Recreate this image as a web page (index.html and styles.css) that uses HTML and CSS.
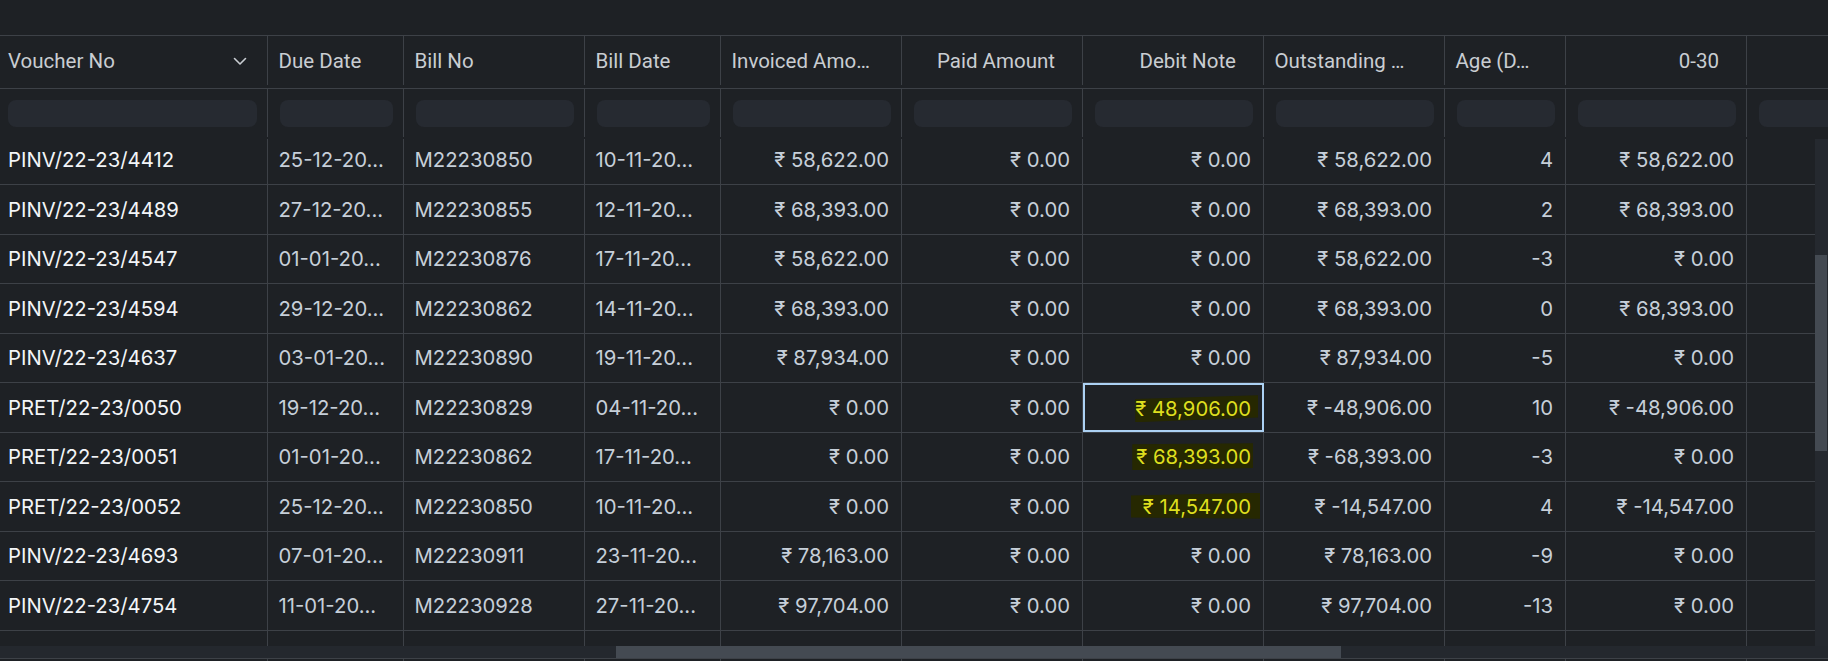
FILE: index.html
```html
<!DOCTYPE html>
<html lang="en">
<head>
<meta charset="utf-8">
<title>Bills grid</title>
<link rel="stylesheet" href="styles.css">
</head>
<body>
<div class="app">
  <div class="topbar"></div>
  <div class="grid">
    <div class="hrow">
      <div class="hcell first"><span class="htext">Voucher No</span><svg class="chev" width="14" height="9" viewBox="0 0 14 9"><polyline points="1.5,1.5 7,7 12.5,1.5" fill="none" stroke="#c9cdd2" stroke-width="1.6" stroke-linecap="round" stroke-linejoin="round"/></svg></div>
      <div class="hcell"><span class="htext">Due Date</span></div>
      <div class="hcell"><span class="htext">Bill No</span></div>
      <div class="hcell"><span class="htext">Bill Date</span></div>
      <div class="hcell"><span class="htext">Invoiced Amo…</span></div>
      <div class="hcell right"><span class="htext">Paid Amount</span></div>
      <div class="hcell right"><span class="htext">Debit Note</span></div>
      <div class="hcell"><span class="htext">Outstanding …</span></div>
      <div class="hcell"><span class="htext">Age (D…</span></div>
      <div class="hcell right"><span class="htext">0-30</span></div>
      <div class="hcell"></div>
    </div>
    <div class="frow">
      <div class="fcell first"><div class="finput"></div></div>
      <div class="fcell"><div class="finput"></div></div>
      <div class="fcell"><div class="finput"></div></div>
      <div class="fcell"><div class="finput"></div></div>
      <div class="fcell"><div class="finput"></div></div>
      <div class="fcell"><div class="finput"></div></div>
      <div class="fcell"><div class="finput"></div></div>
      <div class="fcell"><div class="finput"></div></div>
      <div class="fcell"><div class="finput"></div></div>
      <div class="fcell"><div class="finput"></div></div>
      <div class="fcell"><div class="finput"></div></div>
    </div>
    <div class="body">
      <div class="viewport">
        <div class="rows">
          <div class="row">
            <div class="cell first">PINV/22-23/4412</div><div class="cell">25-12-20...</div><div class="cell">M22230850</div><div class="cell">10-11-20...</div>
            <div class="cell num">₹ 58,622.00</div><div class="cell num">₹ 0.00</div><div class="cell num">₹ 0.00</div><div class="cell num">₹ 58,622.00</div><div class="cell num">4</div><div class="cell num">₹ 58,622.00</div><div class="cell"></div>
          </div>
          <div class="row">
            <div class="cell first">PINV/22-23/4489</div><div class="cell">27-12-20...</div><div class="cell">M22230855</div><div class="cell">12-11-20...</div>
            <div class="cell num">₹ 68,393.00</div><div class="cell num">₹ 0.00</div><div class="cell num">₹ 0.00</div><div class="cell num">₹ 68,393.00</div><div class="cell num">2</div><div class="cell num">₹ 68,393.00</div><div class="cell"></div>
          </div>
          <div class="row">
            <div class="cell first">PINV/22-23/4547</div><div class="cell">01-01-20...</div><div class="cell">M22230876</div><div class="cell">17-11-20...</div>
            <div class="cell num">₹ 58,622.00</div><div class="cell num">₹ 0.00</div><div class="cell num">₹ 0.00</div><div class="cell num">₹ 58,622.00</div><div class="cell num">-3</div><div class="cell num">₹ 0.00</div><div class="cell"></div>
          </div>
          <div class="row">
            <div class="cell first">PINV/22-23/4594</div><div class="cell">29-12-20...</div><div class="cell">M22230862</div><div class="cell">14-11-20...</div>
            <div class="cell num">₹ 68,393.00</div><div class="cell num">₹ 0.00</div><div class="cell num">₹ 0.00</div><div class="cell num">₹ 68,393.00</div><div class="cell num">0</div><div class="cell num">₹ 68,393.00</div><div class="cell"></div>
          </div>
          <div class="row">
            <div class="cell first">PINV/22-23/4637</div><div class="cell">03-01-20...</div><div class="cell">M22230890</div><div class="cell">19-11-20...</div>
            <div class="cell num">₹ 87,934.00</div><div class="cell num">₹ 0.00</div><div class="cell num">₹ 0.00</div><div class="cell num">₹ 87,934.00</div><div class="cell num">-5</div><div class="cell num">₹ 0.00</div><div class="cell"></div>
          </div>
          <div class="row">
            <div class="cell first">PRET/22-23/0050</div><div class="cell">19-12-20...</div><div class="cell">M22230829</div><div class="cell">04-11-20...</div>
            <div class="cell num">₹ 0.00</div><div class="cell num">₹ 0.00</div><div class="cell num focus"><span class="hl hl-a">₹ 48,906.00</span></div><div class="cell num">₹ -48,906.00</div><div class="cell num">10</div><div class="cell num">₹ -48,906.00</div><div class="cell"></div>
          </div>
          <div class="row">
            <div class="cell first">PRET/22-23/0051</div><div class="cell">01-01-20...</div><div class="cell">M22230862</div><div class="cell">17-11-20...</div>
            <div class="cell num">₹ 0.00</div><div class="cell num">₹ 0.00</div><div class="cell num"><span class="hl hl-b">₹ 68,393.00</span></div><div class="cell num">₹ -68,393.00</div><div class="cell num">-3</div><div class="cell num">₹ 0.00</div><div class="cell"></div>
          </div>
          <div class="row">
            <div class="cell first">PRET/22-23/0052</div><div class="cell">25-12-20...</div><div class="cell">M22230850</div><div class="cell">10-11-20...</div>
            <div class="cell num">₹ 0.00</div><div class="cell num">₹ 0.00</div><div class="cell num"><span class="hl hl-c">₹ 14,547.00</span></div><div class="cell num">₹ -14,547.00</div><div class="cell num">4</div><div class="cell num">₹ -14,547.00</div><div class="cell"></div>
          </div>
          <div class="row">
            <div class="cell first">PINV/22-23/4693</div><div class="cell">07-01-20...</div><div class="cell">M22230911</div><div class="cell">23-11-20...</div>
            <div class="cell num">₹ 78,163.00</div><div class="cell num">₹ 0.00</div><div class="cell num">₹ 0.00</div><div class="cell num">₹ 78,163.00</div><div class="cell num">-9</div><div class="cell num">₹ 0.00</div><div class="cell"></div>
          </div>
          <div class="row">
            <div class="cell first">PINV/22-23/4754</div><div class="cell">11-01-20...</div><div class="cell">M22230928</div><div class="cell">27-11-20...</div>
            <div class="cell num">₹ 97,704.00</div><div class="cell num">₹ 0.00</div><div class="cell num">₹ 0.00</div><div class="cell num">₹ 97,704.00</div><div class="cell num">-13</div><div class="cell num">₹ 0.00</div><div class="cell"></div>
          </div>
          <div class="row">
            <div class="cell first"></div><div class="cell"></div><div class="cell"></div><div class="cell"></div>
            <div class="cell"></div><div class="cell"></div><div class="cell"></div><div class="cell"></div><div class="cell"></div><div class="cell"></div><div class="cell"></div>
          </div>
        </div>
      </div>
      <div class="vscroll"><div class="vthumb"></div></div>
    </div>
    <div class="hscroll"><div class="hthumb"></div></div>
    <div class="footrow">
      <div class="cell first"></div><div class="cell"></div><div class="cell"></div><div class="cell"></div>
      <div class="cell"></div><div class="cell"></div><div class="cell"></div><div class="cell"></div><div class="cell"></div><div class="cell"></div><div class="cell"></div>
    </div>
  </div>
</div>
</body>
</html>
```

FILE: styles.css
```css
:root {
  --bg: #1e2125;
  --line: #3d4147;
  --cols: 268px 136px 181px 136px 181px 181px 181px 181px 121px 181px 220px;
}

* { box-sizing: border-box; }

html, body {
  margin: 0;
  padding: 0;
  background: var(--bg);
}

.app {
  width: 1828px;
  height: 661px;
  overflow: hidden;
  background: var(--bg);
  font-family: Roboto, "Liberation Sans", Arial, sans-serif;
}

.topbar {
  height: 35px;
}

.grid {
  border-top: 1px solid var(--line);
  display: flex;
  flex-direction: column;
}

/* header */
.hrow {
  display: grid;
  grid-template-columns: var(--cols);
  height: 53px;
  padding-bottom: 3px;
  border-bottom: 1px solid var(--line);
  overflow: hidden;
}

.hcell {
  display: flex;
  align-items: center;
  padding: 0 27px 0 10.5px;
  border-right: 1px solid var(--line);
  color: #c9cdd2;
  font-size: 20.5px;
  white-space: nowrap;
  overflow: hidden;
}

.hcell.first {
  padding: 0 20px 0 8px;
  justify-content: space-between;
}

.hcell.right {
  justify-content: flex-end;
}

.chev {
  display: block;
  margin-top: 2px;
}

/* filter row */
.frow {
  display: grid;
  grid-template-columns: var(--cols);
  height: 50px;
  padding-bottom: 2px;
  overflow: hidden;
}

.fcell {
  display: flex;
  align-items: center;
  padding: 0 10px 0 12px;
  border-right: 1px solid var(--line);
}

.fcell.first {
  padding-left: 8px;
}

.finput {
  width: 100%;
  height: 27px;
  border-radius: 8px;
  background: #262a31;
}

/* body */
.body {
  display: flex;
  height: 507px;
}

.viewport {
  flex: 1;
  overflow: hidden;
}

.rows {
  margin-top: -3.5px;
}

.row {
  display: grid;
  grid-template-columns: var(--cols);
  height: 49.5px;
  border-bottom: 1px solid var(--line);
}

.cell {
  display: flex;
  align-items: center;
  padding: 0 12px 0 10.5px;
  border-right: 1px solid var(--line);
  color: #c6cfd9;
  font-family: Inter, Roboto, "Liberation Sans", Arial, sans-serif;
  font-size: 20.3px;
  white-space: nowrap;
  overflow: hidden;
}

.cell.first {
  padding-left: 8px;
  color: #f3f5f8;
}

.cell.num {
  justify-content: flex-end;
}

.cell.focus {
  outline: 2px solid #acd1f3;
  outline-offset: -2px;
  overflow: visible;
}

.hl {
  display: inline-block;
  line-height: 25px;
  color: #dedf1f;
  background: #262801;
}

.hl-a {
  padding: 1px 7px 1px 0;
  margin-right: -7px;
  margin-top: 3px;
  clip-path: polygon(0 14%, 100% 0, 100% 82%, 0 100%);
}

.hl-b {
  padding: 1px 2px 1px 4px;
  margin-right: -2px;
  clip-path: polygon(0 4%, 100% 0, 100% 92%, 0 100%);
}

.hl-c {
  padding: 1px 9px 1px 12px;
  margin-right: -9px;
  clip-path: polygon(0 10%, 100% 0, 100% 96%, 0 92%);
}

/* scrollbars */
.vscroll {
  width: 13px;
  background: #25292f;
}

.vthumb {
  width: 12px;
  height: 196px;
  margin-top: 116px;
  background: #444a52;
}

.hscroll {
  height: 12px;
  background: #24282e;
}

.hthumb {
  width: 725px;
  height: 12px;
  margin-left: 616px;
  background: #444a52;
}

/* footer */
.footrow {
  display: grid;
  grid-template-columns: var(--cols);
  height: 30px;
  border-top: 1px solid var(--line);
}

.footrow .cell {
  height: 30px;
}
```
